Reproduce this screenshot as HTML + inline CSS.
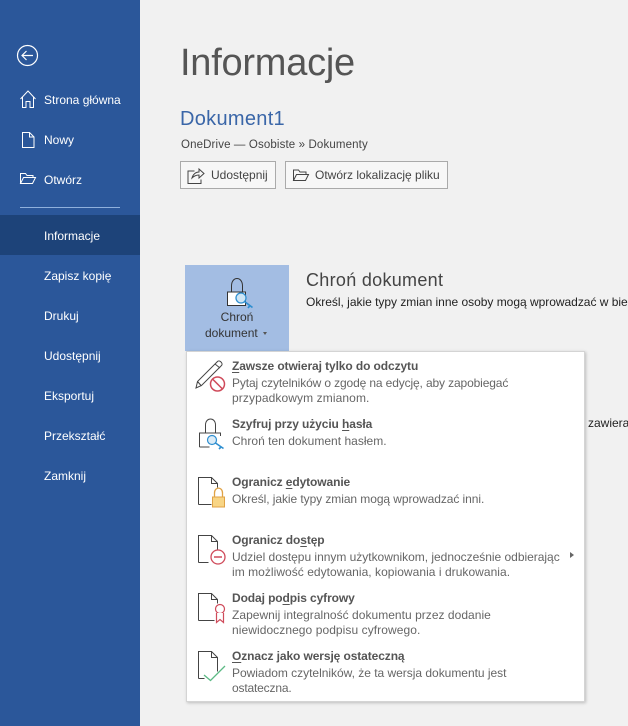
<!DOCTYPE html>
<html lang="pl"><head><meta charset="utf-8"><title>Informacje</title>
<style>
html,body{margin:0;padding:0}
body{width:628px;height:726px;overflow:hidden;position:relative;background:#f1f1f1;font-family:"Liberation Sans",sans-serif;font-size:12px;color:#444}
#side{position:absolute;left:0;top:0;width:140px;height:726px;background:#2b579a}
#sel{position:absolute;left:0;top:215px;width:140px;height:40px;background:#1d4379}
#rule{position:absolute;left:20px;top:207px;width:100px;height:1px;background:#8fb0dc}
.t{position:absolute;white-space:nowrap;line-height:16px}
.n{left:44px;color:#fff;font-size:12px}
.b{font-weight:bold;color:#555;font-size:12px;letter-spacing:-.1px}
.d{color:#666;font-size:12px;margin-top:-1px}
u{text-decoration-thickness:1px;text-underline-offset:2px}
svg{position:absolute;overflow:visible;fill:none}
.btn{position:absolute;top:161px;height:26px;background:#f7f7f7;border:1px solid #aaa}
#hl{position:absolute;left:185px;top:265px;width:104px;height:86px;background:#a3bde3}
#menu{position:absolute;left:186px;top:351px;width:397px;height:349px;background:#fff;border:1px solid #d4d4d4;box-shadow:1px 1px 3px rgba(0,0,0,.22)}
</style></head><body>
<div id="side"></div><div id="sel"></div><div id="rule"></div>

<svg style="left:0;top:0" width="140" height="200" stroke="#fff" stroke-width="1.2">
<circle cx="27.5" cy="55.5" r="10"/><path d="M22 55.5h11M26.5 51l-4.500 4.500 4.500 4.500"/>
<path d="M20.500 99l7.500-8 7.500 8M22.500 97v10.500h3.500v-6h4v6h3.500V97" stroke-width="1"/>
<path d="M22.500 132.500h7l4.500 4.500v10.500h-11.500zM29.500 132.500v4.500h4.500" stroke-width="1"/>
<path d="M20.500 183.500v-10h5l1.500 2h6v2.500M20.500 183.500l3-6h12l-3 6z" stroke-width="1"/>
</svg>
<div class="t n" style="top:92px">Strona główna</div>
<div class="t n" style="top:132px">Nowy</div>
<div class="t n" style="top:172px">Otwórz</div>
<div class="t n" style="top:228px">Informacje</div>
<div class="t n" style="top:268px">Zapisz kopię</div>
<div class="t n" style="top:308px">Drukuj</div>
<div class="t n" style="top:348px">Udostępnij</div>
<div class="t n" style="top:388px">Eksportuj</div>
<div class="t n" style="top:428px">Przekształć</div>
<div class="t n" style="top:468px">Zamknij</div>

<div class="t" style="left:180px;top:38px;font-size:38px;line-height:50px;color:#555;letter-spacing:-.25px">Informacje</div>
<div class="t" style="left:180px;top:106px;font-size:20px;line-height:26px;color:#3a66a8;letter-spacing:.3px">Dokument1</div>
<div class="t" style="left:181px;top:137px;font-size:11.500px;color:#444;letter-spacing:.13px">OneDrive — Osobiste » Dokumenty</div>

<div class="btn" style="left:180px;width:94px"></div>
<div class="btn" style="left:285px;width:161px"></div>
<svg style="left:0;top:0" width="628" height="200" stroke="#444" stroke-width="1">
<path d="M194.500 171h-6.500v12.500h13v-4M192 178c1-4 4-6 7-6v-3l5 4.500-5 4.500v-3c-3 0-5 1-7 3z"/>
<path d="M293.500 180.500v-10.500h5l1.500 2h6v2.500M293.500 180.500l3-6h12l-3 6z"/>
</svg>
<div class="t" style="left:211px;top:167px;font-size:12px;color:#444">Udostępnij</div>
<div class="t" style="left:315px;top:167px;font-size:12px;color:#444">Otwórz lokalizację pliku</div>

<div id="hl"></div>
<svg style="left:0;top:0" width="628" height="726" stroke="#333" stroke-width="1">
<path d="M231.500 292v-6c0-10 11-10 11 0v6"/>
<path d="M227.500 305.500v-13.500h18v13.500z" fill="#fff"/>
<circle cx="241" cy="298" r="5" fill="#cfe6f5" stroke="#2f8fd0" stroke-width="1.300"/>
<path d="M244.500 301.500l8 6M250 305.500l-2 2.500" stroke="#2f8fd0" stroke-width="1.700"/>
</svg>
<div class="t" style="left:185px;width:104px;top:309px;text-align:center;font-size:12px;color:#333">Chroń</div>
<div class="t" style="left:205px;top:325px;font-size:12px;color:#333">dokument</div>
<div style="position:absolute;left:263px;top:332px;width:0;height:0;border-top:3px solid #555;border-left:2.500px solid transparent;border-right:2.500px solid transparent"></div>

<div class="t" style="left:306px;top:269px;font-size:18px;line-height:22px;color:#444;letter-spacing:.3px">Chroń dokument</div>
<div class="t" style="left:306px;top:294px;font-size:12px;color:#222;letter-spacing:-.02px">Określ, jakie typy zmian inne osoby mogą wprowadzać w bież</div>
<div class="t" style="left:588px;top:415px;font-size:12px;color:#222">zawiera</div>

<div id="menu"></div>

<div class="t b" style="left:232px;top:358px"><u>Z</u>awsze otwieraj tylko do odczytu</div>
<div class="t d" style="left:232px;top:376px;letter-spacing:-.13px">Pytaj czytelników o zgodę na edycję, aby zapobiegać</div>
<div class="t d" style="left:232px;top:391px;letter-spacing:.1px">przypadkowym zmianom.</div>
<div class="t b" style="left:232px;top:416px">Szyfruj przy użyciu <u>h</u>asła</div>
<div class="t d" style="left:232px;top:434px;letter-spacing:.02px">Chroń ten dokument hasłem.</div>
<div class="t b" style="left:232px;top:474px">Ogranicz <u>e</u>dytowanie</div>
<div class="t d" style="left:232px;top:492px;letter-spacing:-.07px">Określ, jakie typy zmian mogą wprowadzać inni.</div>
<div class="t b" style="left:232px;top:532px">Ogranicz do<u>s</u>tęp</div>
<div class="t d" style="left:232px;top:550px;letter-spacing:-.02px">Udziel dostępu innym użytkownikom, jednocześnie odbierając</div>
<div class="t d" style="left:232px;top:565px;letter-spacing:.04px">im możliwość edytowania, kopiowania i drukowania.</div>
<div class="t b" style="left:232px;top:590px">Dodaj po<u>d</u>pis cyfrowy</div>
<div class="t d" style="left:232px;top:608px;letter-spacing:.03px">Zapewnij integralność dokumentu przez dodanie</div>
<div class="t d" style="left:232px;top:623px;letter-spacing:.07px">niewidocznego podpisu cyfrowego.</div>
<div class="t b" style="left:232px;top:648px"><u>O</u>znacz jako wersję ostateczną</div>
<div class="t d" style="left:232px;top:666px;letter-spacing:-.02px">Powiadom czytelników, że ta wersja dokumentu jest</div>
<div class="t d" style="left:232px;top:681px;letter-spacing:-.17px">ostateczna.</div>

<svg style="left:0;top:0" width="628" height="726" stroke="#444" stroke-width="1">
<!-- pencil -->
<path d="M196 388l1.500-6.500 20-20c2-2 6 2 4 4l-20 20-5.500 2.500zM197.500 381.500l4 4.500M215 364l5 4"/>
<circle cx="217.500" cy="384" r="7" fill="#fff" stroke="#cf4a5a" stroke-width="1.500"/><path d="M212.500 379l10 10" stroke="#cf4a5a" stroke-width="1.500"/>
<!-- lock -->
<path d="M205.500 433v-8c0-8 10-8 10 0v8M199.500 447v-14h21v3M199.500 447h10"/>
<circle cx="212" cy="440" r="4.500" fill="#dcecf7" stroke="#2f8fd0" stroke-width="1.200"/><path d="M215.500 443l8 5.500M221 447l-2 2" stroke="#2f8fd0" stroke-width="1.600"/>
<!-- docs -->
<path d="M198.500 504.500v-27h13l6 6v4M211.500 477.500v6h6M198.500 504.500h13"/>
<path d="M198.500 562.500v-27h13l6 6v9M211.500 535.500v6h6M198.500 562.500h10"/>
<path d="M198.500 620.500v-27h13l6 6v4M211.500 593.500v6h6M198.500 620.500h16"/>
<path d="M198.500 678.500v-27h13l6 6v14M211.500 651.500v6h6M198.500 678.500h6"/>
<!-- gold lock -->
<path d="M214.500 497v-4c0-6.500 8-6.500 8 0v4" stroke="#e0a245" stroke-width="1.300"/>
<rect x="212.500" y="497" width="12" height="10" fill="#f8d585" stroke="#e0a245"/>
<!-- no entry -->
<circle cx="218" cy="557" r="7" fill="#fff" stroke="#cf4a5a" stroke-width="1.300"/><path d="M214 557h8" stroke="#cf4a5a" stroke-width="1.500"/>
<!-- ribbon -->
<circle cx="220" cy="609" r="4.500" fill="#fff" stroke="#cf4a5a" stroke-width="1.200"/>
<path d="M216.500 613v9.500l3.500-3 3.500 3V613" fill="#fff" stroke="#cf4a5a" stroke-width="1.200"/>
<!-- check -->
<path d="M204 675l6.500 5.500 14.500-14.500" stroke="#5cba85" stroke-width="1.300"/>
</svg>
<div style="position:absolute;left:570px;top:552px;width:0;height:0;border-left:4px solid #666;border-top:3.500px solid transparent;border-bottom:3.500px solid transparent"></div>
</body></html>
